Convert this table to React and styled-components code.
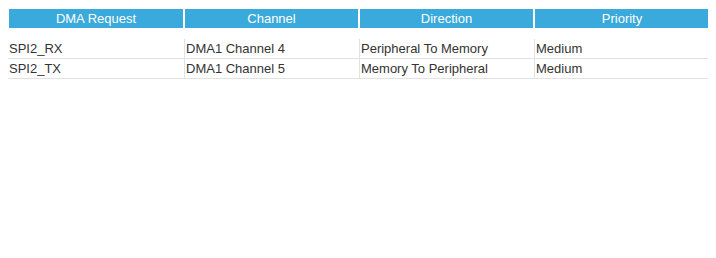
import React from 'react';
import styled, { createGlobalStyle } from 'styled-components';

const GlobalStyle = createGlobalStyle`
  body {
    margin: 8px;
    background: #ffffff;
    font-family: "Liberation Sans", Arial, sans-serif;
  }
`;

const columns = ['176px', '175px', '175px', '176px'];

const Table = styled.div`
  width: 702px;
  font-size: 13px;
`;

const HeaderRow = styled.div`
  display: grid;
  grid-template-columns: ${columns.join(' ')};
  margin-bottom: 10px;
`;

const HeaderCell = styled.div`
  margin: 1px;
  height: 19px;
  line-height: 19px;
  background: #3aa9dc;
  color: #ffffff;
  text-align: center;
`;

const Row = styled.div`
  display: grid;
  grid-template-columns: ${columns.join(' ')};
  border-bottom: 1px solid #e2e2e2;
`;

const Cell = styled.div`
  height: 19px;
  line-height: 20px;
  padding-left: 1px;
  color: #333333;
  border-left: ${({ $first }) => ($first ? 'none' : '1px solid #e2e2e2')};
  border-right: ${({ $last }) => ($last ? '1px solid #e2e2e2' : 'none')};
  white-space: nowrap;
  overflow: hidden;
`;

const headers = ['DMA Request', 'Channel', 'Direction', 'Priority'];

const rows = [
  ['SPI2_RX', 'DMA1 Channel 4', 'Peripheral To Memory', 'Medium'],
  ['SPI2_TX', 'DMA1 Channel 5', 'Memory To Peripheral', 'Medium'],
];

const App = () => (
  <>
    <GlobalStyle />
    <Table>
      <HeaderRow>
        {headers.map((h) => (
          <HeaderCell key={h}>{h}</HeaderCell>
        ))}
      </HeaderRow>
      {rows.map((row, i) => (
        <Row key={i}>
          {row.map((value, j) => (
            <Cell key={j} $first={j === 0} $last={j === row.length - 1}>
              {value}
            </Cell>
          ))}
        </Row>
      ))}
    </Table>
  </>
);

export default App;
